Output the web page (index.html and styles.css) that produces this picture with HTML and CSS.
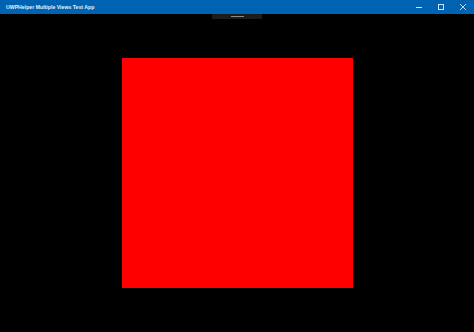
FILE: index.html
```html
<!DOCTYPE html>
<html>
<head>
<meta charset="utf-8">
<link rel="stylesheet" href="styles.css">
</head>
<body>
<div class="window">
  <header class="titlebar">
    <span class="title">UWPHelper Multiple Views Test App</span>
    <div class="controls">
      <div class="btn">
        <svg width="6" height="6" viewBox="0 0 6 6"><path d="M0 3.5H6" stroke="#cfe3f5" stroke-width="1"/></svg>
      </div>
      <div class="btn">
        <svg width="6" height="6" viewBox="0 0 6 6"><rect x="0.5" y="0.5" width="5" height="5" fill="none" stroke="#cfe3f5" stroke-width="1"/></svg>
      </div>
      <div class="btn">
        <svg width="6" height="6" viewBox="0 0 6 6"><path d="M0 0L6 6M6 0L0 6" stroke="#cfe3f5" stroke-width="0.9"/></svg>
      </div>
    </div>
  </header>
  <main class="content">
    <div class="counter"><div class="counter-line"></div></div>
    <div class="square"></div>
  </main>
</div>
</body>
</html>
```
FILE: styles.css
```css
html, body {
  margin: 0;
  padding: 0;
  background: #000;
}
.window {
  width: 474px;
  height: 332px;
  display: flex;
  flex-direction: column;
  overflow: hidden;
}
.titlebar {
  height: 14px;
  flex: none;
  background: #0063b1;
  display: flex;
  align-items: center;
  justify-content: space-between;
}
.title {
  padding-left: 6px;
  font-family: "Liberation Sans", Arial, sans-serif;
  font-size: 5.2px;
  font-weight: bold;
  color: #e8f1fa;
  white-space: nowrap;
}
.controls {
  display: flex;
  height: 100%;
}
.btn {
  width: 22px;
  height: 14px;
  display: flex;
  align-items: center;
  justify-content: center;
}
.content {
  flex: 1;
  position: relative;
  display: flex;
  align-items: center;
  justify-content: center;
}
.counter {
  position: absolute;
  top: 0;
  left: 212px;
  width: 50px;
  height: 5px;
  background: #1c1c1c;
  display: flex;
  justify-content: center;
  align-items: center;
}
.counter-line {
  width: 13px;
  height: 1px;
  background: #8a8a8a;
}
.square {
  width: 231px;
  height: 230px;
  background: #ff0000;
}
```
